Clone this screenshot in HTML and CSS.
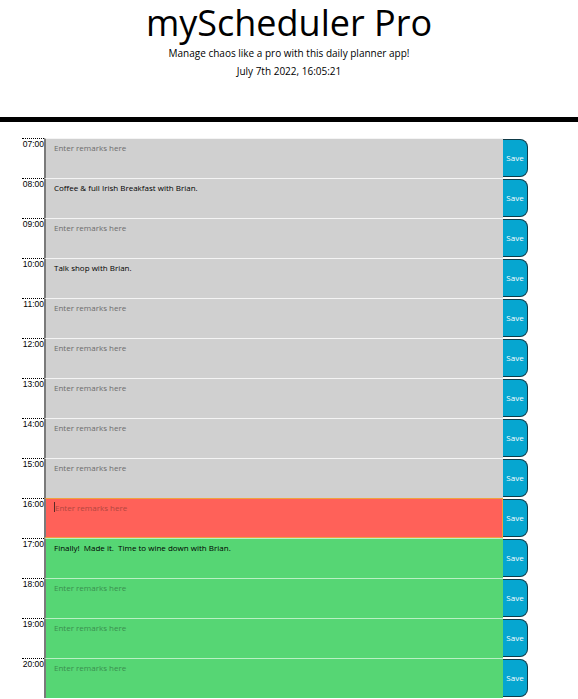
FILE: index.html
```html
<!DOCTYPE html>
<html lang="en">
<head>
<meta charset="utf-8">
<title>mySchedular Pro</title>
<link rel="stylesheet" href="styles.css">
</head>
<body>
<header class="jumbotron">
  <h1 class="title">myScheduler Pro</h1>
  <p class="lead">Manage chaos like a pro with this daily planner app!</p>
  <p class="date">July 7th 2022, 16:05:21</p>
</header>
<main class="planner">
  <div class="row past"><div class="hour">07:00</div><div class="desc ph">Enter remarks here</div><button class="saveBtn">Save</button></div>
  <div class="row past"><div class="hour">08:00</div><div class="desc">Coffee &amp; full Irish Breakfast with Brian.</div><button class="saveBtn">Save</button></div>
  <div class="row past"><div class="hour">09:00</div><div class="desc ph">Enter remarks here</div><button class="saveBtn">Save</button></div>
  <div class="row past"><div class="hour">10:00</div><div class="desc">Talk shop with Brian.</div><button class="saveBtn">Save</button></div>
  <div class="row past"><div class="hour">11:00</div><div class="desc ph">Enter remarks here</div><button class="saveBtn">Save</button></div>
  <div class="row past"><div class="hour">12:00</div><div class="desc ph">Enter remarks here</div><button class="saveBtn">Save</button></div>
  <div class="row past"><div class="hour">13:00</div><div class="desc ph">Enter remarks here</div><button class="saveBtn">Save</button></div>
  <div class="row past"><div class="hour">14:00</div><div class="desc ph">Enter remarks here</div><button class="saveBtn">Save</button></div>
  <div class="row past"><div class="hour">15:00</div><div class="desc ph">Enter remarks here</div><button class="saveBtn">Save</button></div>
  <div class="row present"><div class="hour">16:00</div><div class="desc ph focus"><span class="caret"></span>Enter remarks here</div><button class="saveBtn">Save</button></div>
  <div class="row future"><div class="hour">17:00</div><div class="desc">Finally!&nbsp; Made it.&nbsp; Time to wine down with Brian.</div><button class="saveBtn">Save</button></div>
  <div class="row future"><div class="hour">18:00</div><div class="desc ph">Enter remarks here</div><button class="saveBtn">Save</button></div>
  <div class="row future"><div class="hour">19:00</div><div class="desc ph">Enter remarks here</div><button class="saveBtn">Save</button></div>
  <div class="row future"><div class="hour">20:00</div><div class="desc ph">Enter remarks here</div><button class="saveBtn">Save</button></div>
</main>
</body>
</html>
```
FILE: styles.css
```css
html, body {
  margin: 0;
  padding: 0;
  background: #ffffff;
  font-family: "Open Sans", "Noto Sans", sans-serif;
  color: #000;
}

.jumbotron {
  text-align: center;
  border-bottom: 5px solid #000;
  height: 117px;
  box-sizing: content-box;
  padding: 0;
}

.title {
  margin: 0;
  font-size: 36px;
  font-weight: 400;
  line-height: 45px;
}

.lead {
  margin: 1px 0 0;
  font-size: 10px;
  line-height: 14px;
}

.date {
  margin: 4px 0 0;
  font-size: 10px;
  line-height: 14px;
}

.planner {
  padding-top: 16px;
  padding-left: 22px;
  width: 506px;
}

.row {
  display: flex;
  height: 40px;
}

.hour {
  width: 22px;
  flex: none;
  border-top: 1px dotted #000;
  font-family: "Liberation Sans", Arial, sans-serif;
  font-size: 8.5px;
  line-height: 10px;
  text-align: right;
  padding-top: 0;
  box-sizing: border-box;
}

.desc {
  flex: 1;
  border-left: 2px solid #7a7a7a;
  border-top: 1px solid #f4f4f4;
  padding: 3px 8px;
  font-size: 8px;
  line-height: 11px;
  color: #000;
  box-sizing: border-box;
}

.ph {
  color: #6c6c6c;
}

.past .desc { background: #d0d0d0; }
.present .desc { background: #ff6159; }
.future .desc { background: #56d674; border-top-color: #b8f0c4; }

.present .ph { color: #b2463f; }
.future .ph { color: #3a8f4f; }

.focus {
  border: 1px solid #f0a040;
  border-left: 2px solid #7a7a7a;
}

.caret {
  display: inline-block;
  width: 1px;
  height: 10px;
  background: #5a2a26;
  vertical-align: -1px;
}

.saveBtn {
  width: 25px;
  flex: none;
  margin: 1px 0;
  padding: 0;
  background: #06a6d0;
  color: #fff;
  border: 1px solid #0e3a48;
  border-left: none;
  border-radius: 0 8px 8px 0;
  font-family: "Open Sans", "Noto Sans", sans-serif;
  font-size: 8px;
  line-height: 10px;
}
```
